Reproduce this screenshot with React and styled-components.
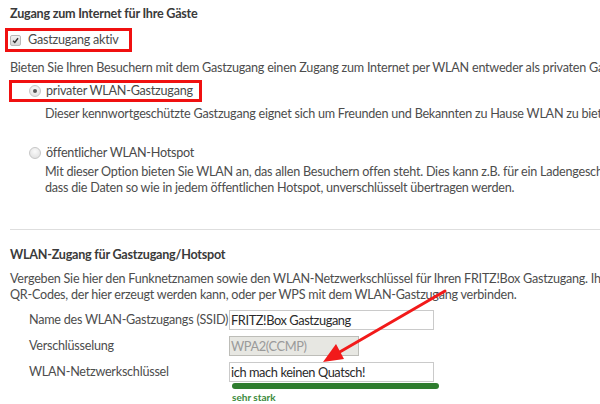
import React from 'react'
import styled, { createGlobalStyle } from 'styled-components'

const GlobalStyle = createGlobalStyle`
  html, body {
    margin: 0;
    padding: 0;
    background: #fff;
    overflow: hidden;
  }
  body {
    font-family: Lato, "Open Sans", sans-serif;
  }
`

const Page = styled.div`
  position: relative;
  width: 600px;
  height: 404px;
  overflow: hidden;
  padding-left: 10px;
  box-sizing: border-box;
  font-size: 12.6px;
  letter-spacing: -0.24px;
  line-height: 16px;
  color: #4d4d4d;
  white-space: nowrap;
`

const Heading = styled.h2`
  margin: ${(p) => p.$top}px 0 0;
  font-size: 12.6px;
  line-height: 16px;
  font-weight: 700;
  color: #3a3a3a;
`

const Text = styled.p`
  margin: ${(p) => p.$top || 0}px 0 0;
  padding-left: ${(p) => p.$indent || 0}px;
`

const Marked = styled.div`
  display: inline-flex;
  align-items: center;
  margin: ${(p) => p.$top}px 0 0 ${(p) => p.$left}px;
  padding: 0 ${(p) => p.$padRight}px 0 ${(p) => p.$padLeft}px;
  border: 3px solid #f01010;
  height: ${(p) => p.$height}px;
`

const Option = styled.label`
  display: flex;
  align-items: center;
  gap: ${(p) => p.$gap}px;
  margin-top: ${(p) => p.$top || 0}px;
  padding-left: ${(p) => p.$indent || 0}px;
  color: #4a4a4a;
  line-height: 16px;
`

const Check = styled.span`
  width: 9px;
  height: 9px;
  border: 1px solid #b9b9b9;
  border-radius: 2px;
  background: linear-gradient(#f2f2f2, #d6d6d6);
  display: flex;
  align-items: center;
  justify-content: center;
`

const Radio = styled.span`
  width: 10px;
  height: 10px;
  border-radius: 50%;
  border: 1px solid #c6c6c6;
  background: radial-gradient(circle at 50% 35%, #fafafa, #dcdcdc);
  display: flex;
  align-items: center;
  justify-content: center;
  &::after {
    content: '';
    width: 4px;
    height: 4px;
    border-radius: 50%;
    background: ${(p) => (p.$on ? '#555' : 'transparent')};
  }
`

const Divider = styled.hr`
  margin: 33px 0 0;
  border: 0;
  border-top: 1px solid #dedede;
`

const Form = styled.div`
  display: grid;
  grid-template-columns: 200px 205px;
  row-gap: 6px;
  margin-top: 7px;
  padding-left: 19px;
  align-items: center;
`

const Label = styled.span`
  color: #4d4d4d;
`

const Field = styled.div`
  box-sizing: border-box;
  height: 20px;
  width: ${(p) => p.$width}px;
  border: 1px solid ${(p) => (p.$disabled ? '#bdbdb8' : '#cacaca')};
  background: ${(p) => (p.$disabled ? '#e7e7e2' : '#fff')};
  color: ${(p) => (p.$disabled ? '#9a9a9a' : '#2a2a2a')};
  font-size: 12.8px;
  letter-spacing: -0.4px;
  line-height: 18px;
  padding-left: 1px;
`

const Strength = styled.div`
  margin: 1px 0 0 222px;
`

const Bar = styled.div`
  width: 207px;
  height: 6px;
  border-radius: 3px;
  background: #2f7d2f;
`

const StrengthText = styled.div`
  margin-top: 2px;
  font-size: 10px;
  letter-spacing: 0;
  line-height: 12px;
  font-weight: 700;
  color: #3b8a3b;
`

const Overlay = styled.svg`
  position: absolute;
  left: 0;
  top: 0;
  pointer-events: none;
`

export default function App() {
  return (
    <Page>
      <GlobalStyle />
      <Heading $top={6}>Zugang zum Internet für Ihre Gäste</Heading>
      <Marked $top={6} $left={-5} $height={18} $padLeft={2} $padRight={10}>
        <Option $gap={7}>
          <Check>
            <svg width="7" height="7" viewBox="0 0 10 10">
              <path d="M1.5 5.2 L4 7.8 L8.6 1.8" fill="none" stroke="#333" strokeWidth="2" />
            </svg>
          </Check>
          Gastzugang aktiv
        </Option>
      </Marked>
      <Text $top={8}>
        Bieten Sie Ihren Besuchern mit dem Gastzugang einen Zugang zum Internet per WLAN entweder als privaten Gastzugang oder als öffentlichen Hotspot an.
      </Text>
      <Marked $top={4} $left={-1} $height={16} $padLeft={17} $padRight={6}>
        <Option $gap={5}>
          <Radio $on />
          privater WLAN-Gastzugang
        </Option>
      </Marked>
      <Text $top={4} $indent={35}>
        Dieser kennwortgeschützte Gastzugang eignet sich um Freunden und Bekannten zu Hause WLAN zu bieten.
      </Text>
      <Option $gap={5} $top={23} $indent={19}>
        <Radio />
        öffentlicher WLAN-Hotspot
      </Option>
      <Text $top={3} $indent={35}>
        Mit dieser Option bieten Sie WLAN an, das allen Besuchern offen steht. Dies kann z.B. für ein Ladengeschäft sinnvoll sein. Beachten Sie,
        <br />
        dass die Daten so wie in jedem öffentlichen Hotspot, unverschlüsselt übertragen werden.
      </Text>
      <Divider />
      <Heading $top={17}>WLAN-Zugang für Gastzugang/Hotspot</Heading>
      <Text $top={8}>
        Vergeben Sie hier den Funknetznamen sowie den WLAN-Netzwerkschlüssel für Ihren FRITZ!Box Gastzugang. Ihre Gäste können sich mithilfe eines
        <br />
        QR-Codes, der hier erzeugt werden kann, oder per WPS mit dem WLAN-Gastzugang verbinden.
      </Text>
      <Form>
        <Label>Name des WLAN-Gastzugangs (SSID)</Label>
        <Field $width={205}>FRITZ!Box Gastzugang</Field>
        <Label>Verschlüsselung</Label>
        <Field $width={130} $disabled>WPA2(CCMP)</Field>
        <Label>WLAN-Netzwerkschlüssel</Label>
        <Field $width={205}>ich mach keinen Quatsch!</Field>
      </Form>
      <Strength>
        <Bar />
        <StrengthText>sehr stark</StrengthText>
      </Strength>
      <Overlay width="600" height="404" viewBox="0 0 600 404">
        <line x1="445" y1="291" x2="338" y2="353" stroke="#f21a1a" strokeWidth="3" strokeLinecap="round" />
        <polygon points="323,362 344,359 336,344" fill="#f21a1a" />
      </Overlay>
    </Page>
  )
}
